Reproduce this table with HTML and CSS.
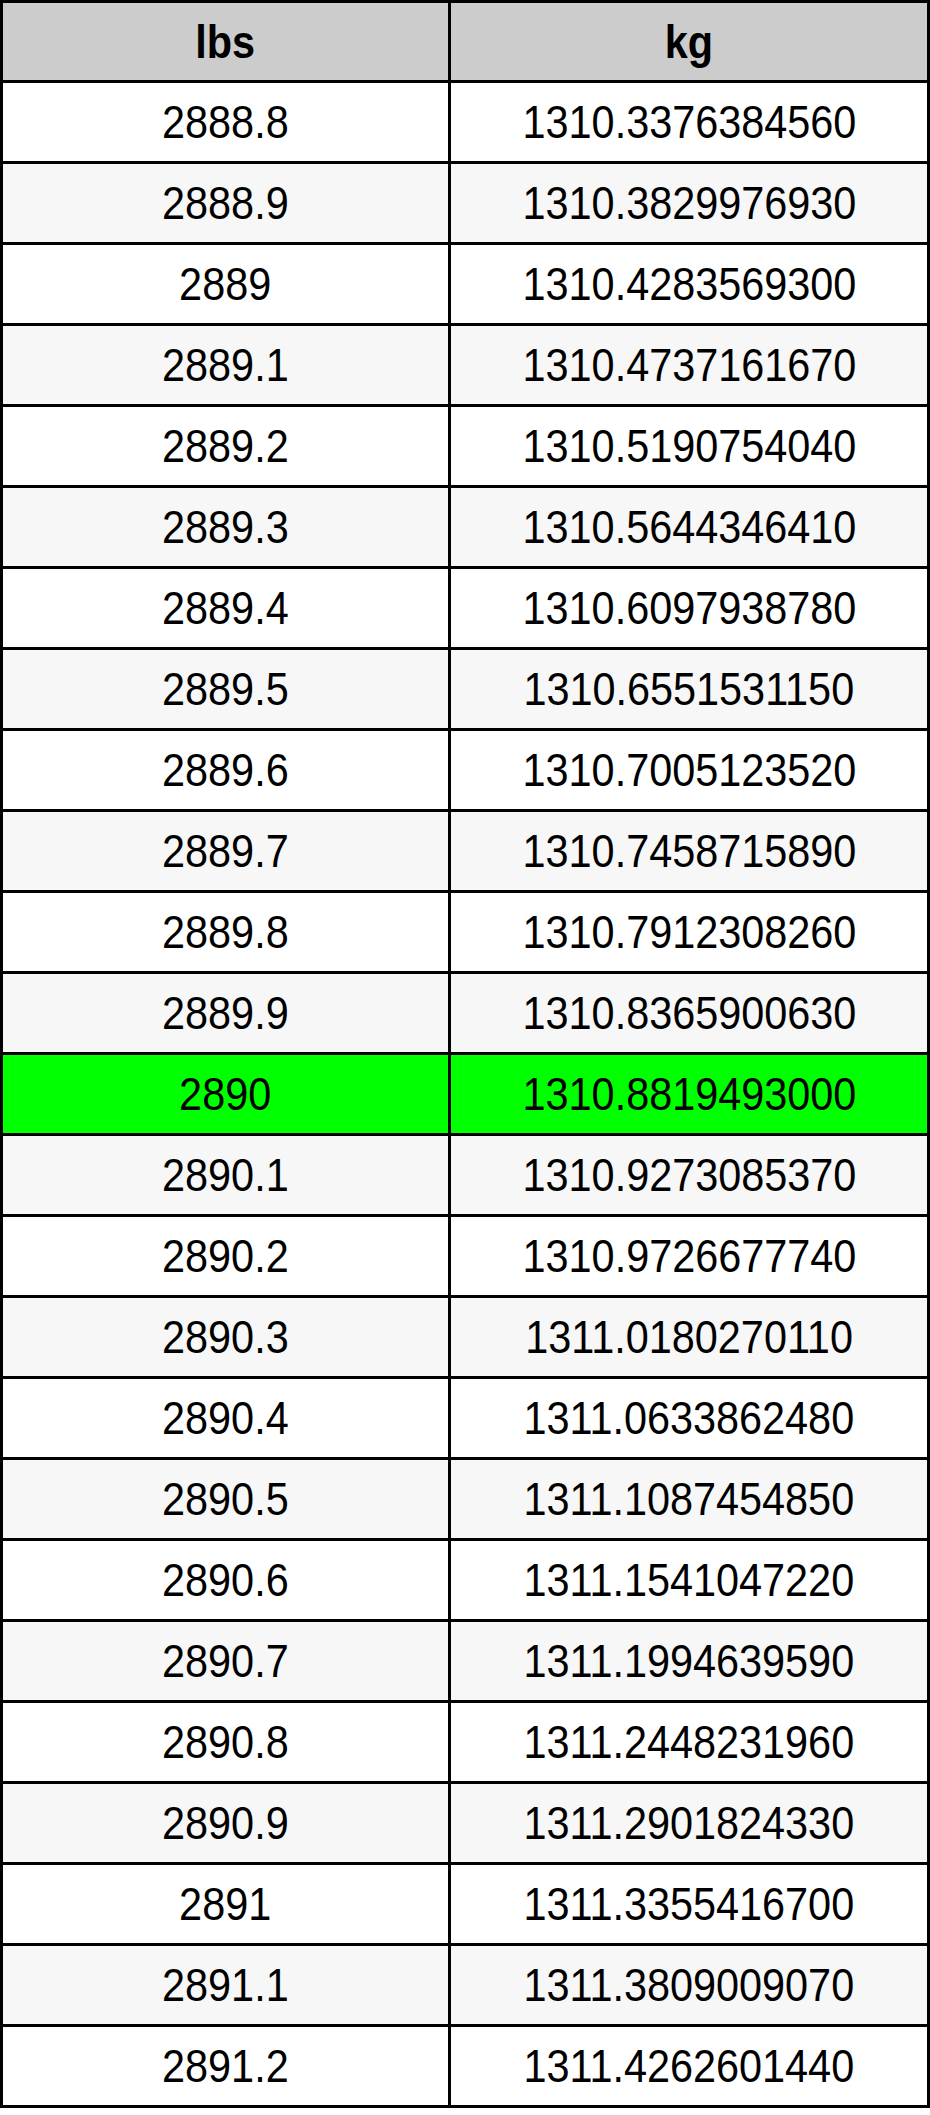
FILE: index.html
```html
<!DOCTYPE html>
<html lang="en">
<head>
<meta charset="utf-8">
<title>lbs to kg</title>
<link rel="stylesheet" href="styles.css">
</head>
<body>
<div class="conv" role="table">
  <div class="cell head" role="columnheader"><span class="t">lbs</span></div>
  <div class="cell head" role="columnheader"><span class="t">kg</span></div>

  <div class="cell"><span class="t">2888.8</span></div><div class="cell"><span class="t">1310.3376384560</span></div>
  <div class="cell alt"><span class="t">2888.9</span></div><div class="cell alt"><span class="t">1310.3829976930</span></div>
  <div class="cell"><span class="t">2889</span></div><div class="cell"><span class="t">1310.4283569300</span></div>
  <div class="cell alt"><span class="t">2889.1</span></div><div class="cell alt"><span class="t">1310.4737161670</span></div>
  <div class="cell"><span class="t">2889.2</span></div><div class="cell"><span class="t">1310.5190754040</span></div>
  <div class="cell alt"><span class="t">2889.3</span></div><div class="cell alt"><span class="t">1310.5644346410</span></div>
  <div class="cell"><span class="t">2889.4</span></div><div class="cell"><span class="t">1310.6097938780</span></div>
  <div class="cell alt"><span class="t">2889.5</span></div><div class="cell alt"><span class="t">1310.6551531150</span></div>
  <div class="cell"><span class="t">2889.6</span></div><div class="cell"><span class="t">1310.7005123520</span></div>
  <div class="cell alt"><span class="t">2889.7</span></div><div class="cell alt"><span class="t">1310.7458715890</span></div>
  <div class="cell"><span class="t">2889.8</span></div><div class="cell"><span class="t">1310.7912308260</span></div>
  <div class="cell alt"><span class="t">2889.9</span></div><div class="cell alt"><span class="t">1310.8365900630</span></div>
  <div class="cell hl"><span class="t">2890</span></div><div class="cell hl"><span class="t">1310.8819493000</span></div>
  <div class="cell alt"><span class="t">2890.1</span></div><div class="cell alt"><span class="t">1310.9273085370</span></div>
  <div class="cell"><span class="t">2890.2</span></div><div class="cell"><span class="t">1310.9726677740</span></div>
  <div class="cell alt"><span class="t">2890.3</span></div><div class="cell alt"><span class="t">1311.0180270110</span></div>
  <div class="cell"><span class="t">2890.4</span></div><div class="cell"><span class="t">1311.0633862480</span></div>
  <div class="cell alt"><span class="t">2890.5</span></div><div class="cell alt"><span class="t">1311.1087454850</span></div>
  <div class="cell"><span class="t">2890.6</span></div><div class="cell"><span class="t">1311.1541047220</span></div>
  <div class="cell alt"><span class="t">2890.7</span></div><div class="cell alt"><span class="t">1311.1994639590</span></div>
  <div class="cell"><span class="t">2890.8</span></div><div class="cell"><span class="t">1311.2448231960</span></div>
  <div class="cell alt"><span class="t">2890.9</span></div><div class="cell alt"><span class="t">1311.2901824330</span></div>
  <div class="cell"><span class="t">2891</span></div><div class="cell"><span class="t">1311.3355416700</span></div>
  <div class="cell alt"><span class="t">2891.1</span></div><div class="cell alt"><span class="t">1311.3809009070</span></div>
  <div class="cell"><span class="t">2891.2</span></div><div class="cell"><span class="t">1311.4262601440</span></div>
</div>
</body>
</html>
```
FILE: styles.css
```css
html, body {
  margin: 0;
  padding: 0;
  background: #ffffff;
}

.conv {
  width: 930px;
  box-sizing: border-box;
  display: grid;
  grid-template-columns: 445px 476px;
  grid-template-rows: 77px;
  grid-auto-rows: 78px;
  gap: 3px;
  padding: 3px;
  background: #000000;
  font-family: "Liberation Sans", Arial, sans-serif;
  font-size: 46px;
  color: #000000;
}

.cell {
  display: flex;
  align-items: center;
  justify-content: center;
  background: #ffffff;
  overflow: hidden;
}

.cell.alt {
  background: #f7f7f7;
}

.cell.hl {
  background: #00ff00;
}

.cell.head {
  background: #cccccc;
  font-weight: bold;
}

.t {
  display: inline-block;
  transform: scaleX(0.9);
  white-space: nowrap;
}
```
